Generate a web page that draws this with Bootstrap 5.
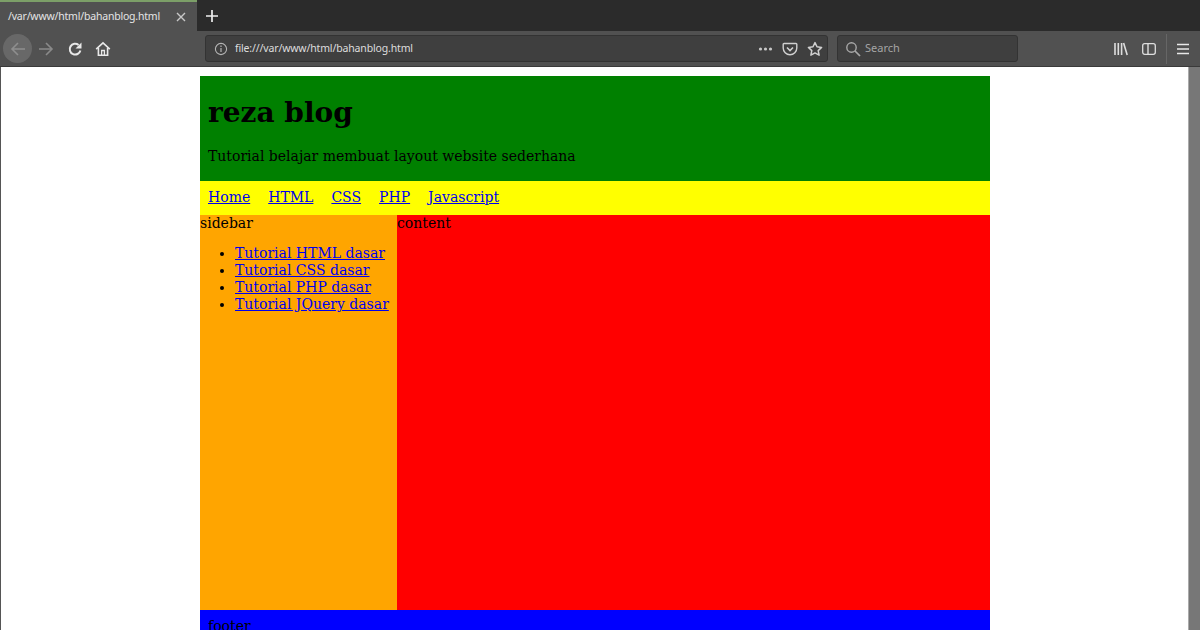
<!DOCTYPE html>
<html lang="id"><head><meta charset="utf-8"><title>reza blog</title>
<link href="https://cdn.jsdelivr.net/npm/bootstrap@5.3.0/dist/css/bootstrap.min.css" rel="stylesheet">
<style>
html,body{height:630px;overflow:hidden;background:#fff}
.chrome{font-family:"Noto Sans","Open Sans",sans-serif;color:#ddd}
.tabstrip{height:31px;background:#2b2b2b}
.tabcell{width:197px;height:31px;background:#515151;border-top:2px solid #7c9f68;padding:0 11px 0 8px;font-size:10.5px;letter-spacing:-.2px;color:#e4e4e4}
.tabplus{width:30px;height:31px}
.toolrow{height:36px;background:#515151;border-bottom:1px solid #3a3a3a;padding:0 11px 0 3px}
.backcircle{width:29px;height:29px;border-radius:50%;background:#686868}
.navbtn{width:28px;height:28px}
.navshift{margin-left:1px}
.urlbox{height:27px;width:623px;margin-left:88px;background:#3f3f3f;border:1px solid #333;border-radius:3px;font-size:10.5px;letter-spacing:-.15px;color:#ddd;padding:0 4px 0 8px}
.urltext{margin-left:7px}
.pageactions{gap:9px}
.findbox{height:27px;width:181px;margin-left:9px;background:#3f3f3f;border:1px solid #333;border-radius:3px;font-size:11px;color:#a5a5a5;padding:0 7px}
.findbox svg{margin-right:4px}
.rightset{margin-left:auto}
.sep{width:1px;height:30px;background:#666;margin:0 10px}
.libicon{margin-right:14px}
.pagearea{height:563px}
.leftedge{width:1px;background:#555}
.pagebody{overflow:hidden;padding-top:9px;font-family:"DejaVu Serif",serif;font-size:14px;line-height:normal;color:#000;background:#fff}
.scrolltrack{width:12px;background:#777;border-left:1px solid #aaa}
.frame{width:790px;margin-left:199px}
.frame a{color:#00e}
.headzone{height:105px;background:#008000;padding:0 8px;overflow:hidden}
.headzone h1{font-size:28px;font-weight:700;font-family:inherit;margin:19px 0 18px;line-height:35px}
.headzone p{margin:0;line-height:17px}
.menuzone{height:34px;background:#ff0;padding:0 8px;gap:18px;line-height:33px}
.colzone{height:395px}
.sidezone{width:197px;background:orange;line-height:17px}
.sidezone ul{margin:13px 0 0;padding-left:35px;line-height:17px}
.mainzone{background:red;line-height:17px}
.footzone{height:40px;background:#00f;padding:8px 8px}
</style></head>
<body>
<div class="chrome">
<div class="tabstrip d-flex">
<div class="tabcell d-flex align-items-center justify-content-between"><span>/var/www/html/bahanblog.html</span>
<svg width="10" height="10" viewBox="0 0 10 10"><path d="M1 1l8 8M9 1L1 9" stroke="#c8c8c8" stroke-width="1.4"/></svg></div>
<div class="tabplus d-flex align-items-center justify-content-center"><svg width="14" height="14" viewBox="0 0 14 14"><path d="M7 1v12M1 7h12" stroke="#eee" stroke-width="1.7"/></svg></div>
</div>
<div class="toolrow d-flex align-items-center">
<div class="backcircle d-flex align-items-center justify-content-center"><svg width="16" height="16" viewBox="0 0 16 16" fill="none"><path d="M15 8H2M8 2L2 8l6 6" stroke="#8e8e8e" stroke-width="1.6"/></svg></div>
<div class="navbtn d-flex align-items-center justify-content-center"><svg width="16" height="16" viewBox="0 0 16 16" fill="none"><path d="M1 8h13M8 2l6 6-6 6" stroke="#8a8a8a" stroke-width="1.6"/></svg></div>
<div class="navbtn navshift d-flex align-items-center justify-content-center"><svg width="16" height="16" viewBox="0 0 16 16" fill="none"><path d="M13.4 9.5A5.4 5.4 0 1 1 11.6 4" stroke="#e8e8e8" stroke-width="2"/><path d="M14.5 1.5V7.5H8.5z" fill="#e8e8e8"/></svg></div>
<div class="navbtn d-flex align-items-center justify-content-center"><svg width="16" height="16" viewBox="0 0 16 16" fill="none"><path d="M1.2 8.2L8 1.8l6.8 6.4" stroke="#e8e8e8" stroke-width="1.6"/><path d="M3.4 7v7.2h9.2V7" stroke="#e8e8e8" stroke-width="1.6"/><path d="M6.6 14V9.5h2.8V14" stroke="#e8e8e8" stroke-width="1.3"/></svg></div>
<div class="urlbox d-flex align-items-center">
<svg width="14" height="14" viewBox="0 0 14 14" fill="none"><circle cx="7" cy="7" r="5.6" stroke="#b5b5b5" stroke-width="1.1"/><path d="M7 6v4M7 3.6v1.3" stroke="#b5b5b5" stroke-width="1.2"/></svg>
<span class="urltext">file:///var/www/html/bahanblog.html</span>
<span class="ms-auto d-flex align-items-center pageactions">
<svg width="15" height="6" viewBox="0 0 15 6"><circle cx="2.5" cy="3" r="1.6" fill="#c8c8c8"/><circle cx="7.5" cy="3" r="1.6" fill="#c8c8c8"/><circle cx="12.5" cy="3" r="1.6" fill="#c8c8c8"/></svg>
<svg width="16" height="16" viewBox="0 0 16 16" fill="none"><path d="M2 2.5h12a.8.8 0 0 1 .8.8V7a6.8 6.8 0 0 1-13.6 0V3.3A.8.8 0 0 1 2 2.5z" stroke="#d0d0d0" stroke-width="1.4"/><path d="M5 6.5l3 3 3-3" stroke="#d0d0d0" stroke-width="1.6"/></svg>
<svg width="16" height="16" viewBox="0 0 16 16" fill="none"><path d="M8 1.6l2 4.2 4.6.6-3.4 3.2.9 4.6L8 11.9l-4.1 2.3.9-4.6L1.4 6.4 6 5.8z" stroke="#d0d0d0" stroke-width="1.5" stroke-linejoin="round"/></svg>
</span></div>
<div class="findbox d-flex align-items-center">
<svg width="16" height="16" viewBox="0 0 16 16" fill="none"><circle cx="6.5" cy="6.5" r="4.7" stroke="#a8a8a8" stroke-width="1.4"/><path d="M10 10l5 5" stroke="#a8a8a8" stroke-width="1.7"/></svg><span>Search</span></div>
<div class="rightset d-flex align-items-center">
<svg width="14" height="14" viewBox="0 0 14 14" fill="none" class="libicon"><path d="M1 1v12M4.3 1v12M7.6 1v12M9.6 1l3.6 12" stroke="#dedede" stroke-width="1.6"/></svg>
<svg width="14" height="14" viewBox="0 0 14 14" fill="none"><rect x=".7" y="1.7" width="12.6" height="10.6" rx="2" stroke="#dedede" stroke-width="1.3"/><path d="M6 2v10" stroke="#dedede" stroke-width="1.4"/></svg>
<div class="sep"></div>
<svg width="12" height="14" viewBox="0 0 12 14" fill="none"><path d="M0 2.5h12M0 7h12M0 11.5h12" stroke="#e8e8e8" stroke-width="1.6"/></svg>
</div>
</div>
</div>
<div class="pagearea d-flex">
<div class="leftedge"></div>
<div class="pagebody flex-grow-1">
<div class="frame">
<div class="headzone"><h1>reza blog</h1><p>Tutorial belajar membuat layout website sederhana</p></div>
<div class="menuzone d-flex"><a href="#">Home</a><a href="#">HTML</a><a href="#">CSS</a><a href="#">PHP</a><a href="#">Javascript</a></div>
<div class="colzone d-flex">
<div class="sidezone">sidebar
<ul><li><a href="#">Tutorial HTML dasar</a></li><li><a href="#">Tutorial CSS dasar</a></li><li><a href="#">Tutorial PHP dasar</a></li><li><a href="#">Tutorial JQuery dasar</a></li></ul></div>
<div class="mainzone flex-grow-1">content</div>
</div>
<div class="footzone">footer</div>
</div>
</div>
<div class="scrolltrack"></div>
</div>
<script src="https://cdn.jsdelivr.net/npm/bootstrap@5.3.0/dist/js/bootstrap.bundle.min.js"></script>
</body></html>
